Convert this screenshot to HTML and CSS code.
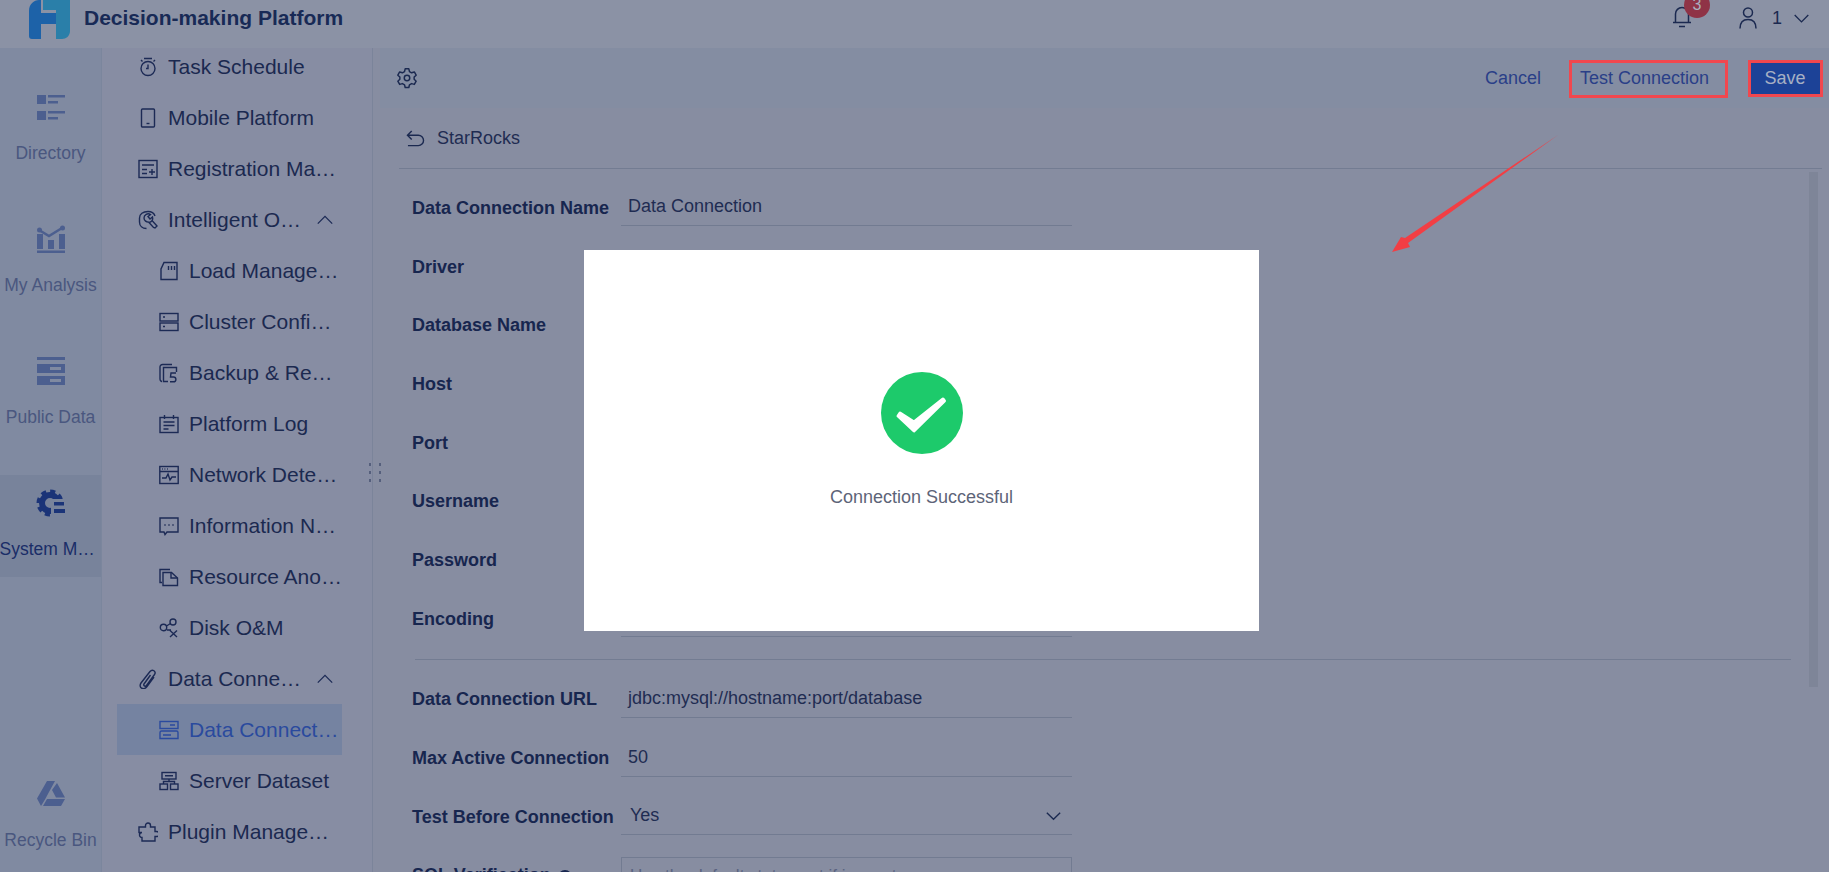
FILE: index.html
```html
<!DOCTYPE html>
<html lang="en">
<head>
<meta charset="utf-8">
<title>Decision-making Platform</title>
<link rel="stylesheet" href="styles.css">
</head>
<body>
<svg class="defs" width="0" height="0" aria-hidden="true">
  <defs>
    <symbol id="i-clock" viewBox="0 0 20 20"><path d="M6 1.500h8M4.500 4.500 3 3M15.500 4.500 17 3"/><circle cx="10" cy="11.500" r="7"/><path d="M10 7.500v4h-2"/></symbol>
    <symbol id="i-mobile" viewBox="0 0 20 20"><rect x="3.500" y="1" width="13" height="18" rx="1"/><path d="M8.500 15.500h3"/></symbol>
    <symbol id="i-reg" viewBox="0 0 20 20"><rect x="1" y="1.500" width="18" height="17"/><path d="M4 6h12M4 10.500h5M4 14.500h5M11 13h6M14 10v6"/></symbol>
    <symbol id="i-ops" viewBox="0 0 20 20"><path d="M17 6C16 3 13 1.500 10 1.500 5 1.500 1.500 4 1.500 8v4c0 4 3 6.500 7 6.500"/><path d="M6 8a4.200 4.200 0 0 1 6.500-3.500l-2.500 2 2 2.500 2.500-2a4.200 4.200 0 0 1-3.500 5.500l4.500 5 1.500 .5 2-2-5-5.500M6 8a4.200 4.200 0 0 0 5 4"/></symbol>
    <symbol id="i-card" viewBox="0 0 20 20"><path d="M5 1.500h13v17H2V8z"/><path d="M9.500 5v4M12.500 5v4M15.500 5v4"/></symbol>
    <symbol id="i-cluster" viewBox="0 0 20 20"><rect x="1" y="1.500" width="18" height="7.500"/><rect x="1" y="11" width="18" height="7.500"/><path d="M4 5h2M4 14.500h2"/></symbol>
    <symbol id="i-backup" viewBox="0 0 20 20"><path d="M3 18.500C2 18.500 1 17.500 1 16V4C1 2.500 2 1.500 3.500 1.500H13"/><path d="M9 18.500H4.500V4.500H17.500V9"/><path d="M17 10h-5l-.5 4h3a2.300 2.300 0 0 1 0 4.800H11"/></symbol>
    <symbol id="i-log" viewBox="0 0 20 20"><rect x="1" y="3.500" width="18" height="15"/><path d="M5.500 1v4M14.500 1v4M4.500 8h11M4.500 11.500h11M4.500 15h5"/></symbol>
    <symbol id="i-net" viewBox="0 0 20 20"><rect x=".8" y="1.500" width="18.400" height="17"/><path d="M1 6.500h18M3 4h.8M5.500 4h.8M8 4h.8M3 13h4l2-4 2 6 2-3h4"/></symbol>
    <symbol id="i-info" viewBox="0 0 20 20"><path d="M1 2h18v14H8l-2 2.500L5 16H1z"/><path d="M5.500 9h1M9.500 9h1M13.500 9h1" stroke-width="2"/></symbol>
    <symbol id="i-res" viewBox="0 0 20 20"><path d="M3 15.500H1V2.500h10"/><path d="M4 18.500V5.500h8.500l6 5.500v7.500z"/><path d="M12 5.500V11h6.500"/></symbol>
    <symbol id="i-disk" viewBox="0 0 20 20"><circle cx="4.500" cy="9.500" r="3.200"/><circle cx="14" cy="4" r="3"/><path d="M7.500 8 11.500 5.500M8 12h4M11 12.500l7 6.500M18 12.500l-7 6.500"/></symbol>
    <symbol id="i-clip" viewBox="0 0 20 20"><path d="M12.500 6 6 15c-1 1.500 1 3 2.500 1.500l8-11c2-3-2-6-4.500-3L3 14c-3 4.500 2.500 8 6 3.500l7-9.500"/></symbol>
    <symbol id="i-conn" viewBox="0 0 20 20"><rect x="1" y="1.500" width="18" height="7"/><path d="M1 12.500v6h18v-6a1.500 1.500 0 0 0-1.500-1.500h-15A1.500 1.500 0 0 0 1 12.500zM11 5h5M4 15h8"/></symbol>
    <symbol id="i-server" viewBox="0 0 20 20"><rect x="3" y="1.500" width="14" height="6.500"/><rect x="1" y="13" width="7.500" height="5.500"/><rect x="11.500" y="13" width="7.500" height="5.500"/><path d="M10 8v2.500M4.500 13v-2.500h11V13M6 4.800h8"/></symbol>
    <symbol id="i-plugin" viewBox="0 0 20 20"><path d="M7.500 3.500a2.500 2.500 0 0 1 5 0V5H17v4.500h1.500a2.500 2.500 0 0 1 0 5H17V19H4v-3.500a2.500 2.500 0 0 1 0-5H1V5h6.500z"/></symbol>
    <symbol id="i-chev" viewBox="0 0 20 20"><path d="M2 14 10 6l8 8"/></symbol>
  </defs>
</svg>

<div class="app">
  <header class="topbar">
    <svg class="logo" viewBox="0 0 41 39" aria-hidden="true">
      <path class="logo-l" d="M0 39V11C0 4 5 0 10 0h2v13h15v11H12v15H3a3 3 0 0 1-3-3z"/>
      <path class="logo-r" d="M14 0h27v31c0 5-4 8-8 8h-6V10H14z"/>
    </svg>
    <div class="brand">Decision-making Platform</div>
    <div class="top-right">
      <div class="bell">
        <svg viewBox="0 2 20 24" aria-hidden="true"><path d="M1 18.500h18M3.500 18.500V10a6.500 6.500 0 0 1 13 0v8.500M7 22.500h6"/></svg>
        <span class="badge">3</span>
      </div>
      <svg class="user" viewBox="0 0 18 22" aria-hidden="true"><circle cx="9" cy="5.500" r="4.500"/><path d="M1 21.500c0-6 3-9 8-9s8 3 8 9"/></svg>
      <span class="user-name">1</span>
      <svg class="user-chev" viewBox="0 0 20 12" aria-hidden="true"><path d="M2 2l8 8 8-8"/></svg>
    </div>
  </header>

  <div class="body">
    <nav class="rail">
      <div class="rail-top">
        <div class="rail-item">
          <svg viewBox="0 0 28 28" aria-hidden="true"><path class="fill" d="M0 2h9v9H0zM0 18h9v9H0zM11 2h17v2.500H11zM11 8h10v2.500H11zM11 18h17v2.500H11zM11 24h10v2.500H11z"/></svg>
          <span>Directory</span>
        </div>
        <div class="rail-item">
          <svg viewBox="0 0 28 28" aria-hidden="true"><path class="fill" d="M0 9h6v15H0zM11 15h6v9h-6zM22 9h6v15h-6zM0 25.500h28V28H0z"/><path class="line" d="M2 5l10 6 13-8"/><circle class="fill" cx="2.500" cy="5" r="2.500"/><circle class="fill" cx="25.500" cy="3" r="2.500"/></svg>
          <span>My Analysis</span>
        </div>
        <div class="rail-item">
          <svg viewBox="0 0 28 28" aria-hidden="true"><path class="fill" d="M0 0h28v3H0zM0 7h28v9H0zM0 19h28v9H0z"/><path class="hole" d="M13 10h11v3H13zM13 22h11v3H13z"/></svg>
          <span>Public Data</span>
        </div>
        <div class="rail-item active">
          <svg viewBox="0 0 28 28" aria-hidden="true"><circle class="gear-ring" cx="13" cy="14" r="8"/><circle class="gear-teeth" cx="13" cy="14" r="11.500"/><path class="gear-cut" d="M14 10h14v18H14z"/><path class="fill" d="M17 13h10v3.500H17zM17 20h11v4H17z"/></svg>
          <span class="clip">System Management</span>
        </div>
      </div>
      <div class="rail-item rail-bin">
        <svg viewBox="0 0 28 28" aria-hidden="true"><path class="fill" d="M10 1h8l-6 11-4 7.500L4 26 0 18.500zM20 3l8 14.500h-9L15 10zM10 19h18l-4 7H6z"/></svg>
        <span>Recycle Bin</span>
      </div>
    </nav>

    <aside class="nav">
      <div class="nav-list">
        <div class="row"><svg class="ico"><use href="#i-clock"/></svg><span class="lbl">Task Schedule</span></div>
        <div class="row"><svg class="ico"><use href="#i-mobile"/></svg><span class="lbl">Mobile Platform</span></div>
        <div class="row"><svg class="ico"><use href="#i-reg"/></svg><span class="lbl">Registration Management</span></div>
        <div class="row"><svg class="ico"><use href="#i-ops"/></svg><span class="lbl short">Intelligent O&amp;M</span><svg class="chev"><use href="#i-chev"/></svg></div>
        <div class="row sub"><svg class="ico"><use href="#i-card"/></svg><span class="lbl">Load Management</span></div>
        <div class="row sub"><svg class="ico"><use href="#i-cluster"/></svg><span class="lbl">Cluster Configuration</span></div>
        <div class="row sub"><svg class="ico"><use href="#i-backup"/></svg><span class="lbl">Backup &amp; Restore</span></div>
        <div class="row sub"><svg class="ico"><use href="#i-log"/></svg><span class="lbl">Platform Log</span></div>
        <div class="row sub"><svg class="ico"><use href="#i-net"/></svg><span class="lbl">Network Detection</span></div>
        <div class="row sub"><svg class="ico"><use href="#i-info"/></svg><span class="lbl">Information Notice</span></div>
        <div class="row sub"><svg class="ico"><use href="#i-res"/></svg><span class="lbl">Resource Anomaly</span></div>
        <div class="row sub"><svg class="ico"><use href="#i-disk"/></svg><span class="lbl">Disk O&amp;M</span></div>
        <div class="row"><svg class="ico"><use href="#i-clip"/></svg><span class="lbl short">Data Connection</span><svg class="chev"><use href="#i-chev"/></svg></div>
        <div class="row sub selected"><svg class="ico"><use href="#i-conn"/></svg><span class="lbl">Data Connection</span></div>
        <div class="row sub"><svg class="ico"><use href="#i-server"/></svg><span class="lbl">Server Dataset</span></div>
        <div class="row"><svg class="ico"><use href="#i-plugin"/></svg><span class="lbl">Plugin Management</span></div>
      </div>
      <div class="grip" aria-hidden="true"><i></i><i></i><i></i><i></i><i></i><i></i></div>
    </aside>

    <main class="main">
      <div class="toolbar">
        <svg class="gear" viewBox="0 0 24 24" aria-hidden="true"><path d="M10 2h4l.7 3 2.300 1.300 3-.9 2 3.500-2.200 2.100v2.400l2.200 2.100-2 3.500-3-.9-2.300 1.300-.7 3h-4l-.7-3L7 18.100l-3 .9-2-3.500L4.200 13.400v-2.400L2 8.900l2-3.500 3 .9L9.300 5z"/><circle cx="12" cy="12" r="3"/></svg>
        <div class="actions">
          <span class="act">Cancel</span>
          <span class="act act-test">Test Connection</span>
          <span class="btn-save">Save</span>
        </div>
      </div>
      <div class="title-row">
        <svg class="back" viewBox="0 0 20 18" aria-hidden="true"><path d="M6 1 1.500 5.500 6 10M2 5.500h11a5.500 5.500 0 0 1 0 11H2"/></svg>
        <span>StarRocks</span>
      </div>
      <div class="form-wrap">
        <form class="form">
          <div class="field"><label>Data Connection Name</label><div class="val">Data Connection</div></div>
          <div class="field"><label>Driver</label><div class="val"></div></div>
          <div class="field"><label>Database Name</label><div class="val"></div></div>
          <div class="field"><label>Host</label><div class="val"></div></div>
          <div class="field"><label>Port</label><div class="val"></div></div>
          <div class="field"><label>Username</label><div class="val"></div></div>
          <div class="field"><label>Password</label><div class="val"></div></div>
          <div class="field"><label>Encoding</label><div class="val"></div></div>
          <hr class="sep">
          <div class="field"><label>Data Connection URL</label><div class="val">jdbc:mysql://hostname:port/database</div></div>
          <div class="field"><label>Max Active Connection</label><div class="val">50</div></div>
          <div class="field"><label>Test Before Connection</label><div class="val val-sel">Yes<svg viewBox="0 0 20 12" aria-hidden="true"><path d="M2 2l8 8 8-8"/></svg></div></div>
          <div class="field"><label>SQL Verification <span class="help">?</span></label><div class="val val-box">Use the default statement if is empty</div></div>
        </form>
        <div class="scrollbar"></div>
      </div>
    </main>
  </div>

  <div class="dialog" role="dialog">
    <svg class="ok" viewBox="0 0 82 82" aria-hidden="true"><circle cx="41" cy="41" r="41"/><path d="M19 41l14 9 29-23 1.500 2L33 59 17 44z"/></svg>
    <p>Connection Successful</p>
  </div>

  <div class="mark mark-test"></div>
  <div class="mark mark-save"></div>
  <svg class="arrow" viewBox="0 0 170 120" aria-hidden="true"><path d="M168 1 15 104l-4-1-9 15 18-5-2-4z"/></svg>
</div>
</body>
</html>
```
FILE: styles.css
```css
* { box-sizing: border-box; }
html, body { margin: 0; height: 100%; }
body {
  font-family: "Liberation Sans", Arial, sans-serif;
  color: #1b2950;
  background: #878da1;
  overflow: hidden;
}
.defs { position: absolute; }
symbol { fill: none; stroke: currentColor; stroke-width: 1.4; }
.app { position: relative; width: 1829px; height: 872px; overflow: hidden; display: flex; flex-direction: column; }

.topbar { height: 48px; flex: none; display: flex; align-items: center; background: #8b92a5; padding: 0 0 12px 29px; }
.logo { width: 41px; height: 39px; align-self: flex-start; margin-right: 14px; flex: none; }
.logo-l { fill: #1d62a8; }
.logo-r { fill: #2a7fa9; }
.brand { font-size: 21px; font-weight: 700; color: #182a56; }
.top-right { margin-left: auto; display: flex; align-items: center; padding-right: 19px; color: #1b2950; }
.bell { position: relative; width: 20px; height: 24px; margin-right: 47px; }
.bell svg { width: 20px; height: 24px; display: block; fill: none; stroke: #1b2950; stroke-width: 1.5; }
.badge { position: absolute; left: 12px; top: -14px; width: 26px; height: 26px; border-radius: 50%; background: #8f3346; color: #aab0bf; font-size: 16px; line-height: 26px; text-align: center; }
.user { width: 18px; height: 22px; fill: none; stroke: #1b2950; stroke-width: 1.5; margin-right: 15px; }
.user-name { font-size: 18px; margin-right: 11px; }
.user-chev { width: 17px; height: 11px; fill: none; stroke: #1b2950; stroke-width: 1.6; }

.body { flex: 1; min-height: 0; display: flex; }

.rail { width: 102px; flex: none; background: #808aa1; display: flex; flex-direction: column; justify-content: space-between; border-right: 1px solid #7b869d; }
.rail-top { display: flex; flex-direction: column; gap: 30px; padding-top: 28px; }
.rail-item { height: 102px; padding-top: 17px; display: flex; flex-direction: column; align-items: center; color: #4a577f; font-size: 17.5px; line-height: 20px; gap: 22px; }
.rail-item svg { width: 28px; height: 28px; flex: none; overflow: visible; }
.rail-item .fill { fill: #4c5f8f; }
.rail-item .line { fill: none; stroke: #4c5f8f; stroke-width: 2.5; }
.rail-item .hole { fill: #808aa1; }
.rail-item.active { background: #78839b; color: #1a2d68; margin-top: 3px; padding-top: 14px; }
.rail-item.active .fill { fill: #1b3478; }
.gear-ring { fill: none; stroke: #1b3478; stroke-width: 6; }
.gear-teeth { fill: none; stroke: #1b3478; stroke-width: 4; stroke-dasharray: 5 4; }
.gear-cut { fill: #78839b; }
.clip { display: block; width: 97px; margin-right: 5px; overflow: hidden; white-space: nowrap; text-overflow: ellipsis; }
.rail-bin { height: auto; padding-top: 0; padding-bottom: 22px; }

.nav { width: 271px; flex: none; position: relative; background: #878da3; border-right: 1px solid #7b849a; }
.nav-list { margin: -7px 0 0 15px; width: 225px; }
.row { height: 51px; display: flex; align-items: center; padding: 0 0 0 21px; font-size: 21px; color: #1b2950; }
.row.sub { padding-left: 42px; }
.ico { width: 20px; height: 20px; flex: none; color: #1c2a55; margin-right: 10px; }
.lbl { overflow: hidden; white-space: nowrap; text-overflow: ellipsis; min-width: 0; flex: 1; }
.lbl.short { flex: none; width: 137px; }
.chev { width: 18px; height: 18px; margin-left: 11px; color: #1c2a55; flex: none; }
.selected { background: #7583a1; color: #2a4a9e; }
.selected .ico { color: #2a4a9e; }
.grip { position: absolute; right: -10px; top: 415px; display: grid; grid-template-columns: 3px 3px; gap: 5px 7px; }
.grip i { width: 2px; height: 3px; background: #555f7c; }

.main { flex: 1; min-width: 0; display: flex; flex-direction: column; padding-left: 7px; }
.toolbar { height: 60px; flex: none; background: #848da2; display: flex; align-items: center; padding: 0 9px 0 16px; }
.gear { width: 22px; height: 22px; fill: none; stroke: #1b2950; stroke-width: 1.6; stroke-linejoin: round; }
.actions { margin-left: auto; display: flex; align-items: center; font-size: 18px; color: #2a3f88; }
.act { margin-right: 39px; }
.act-test { margin-right: 41px; }
.btn-save { width: 70px; height: 33px; background: #1c4297; color: #a6b0c4; display: flex; align-items: center; justify-content: center; }

.title-row { height: 61px; flex: none; display: flex; align-items: center; padding-left: 7px; margin: 0 7px 0 19px; border-bottom: 1px solid #737c92; font-size: 18px; color: #1f2c52; }
.back { width: 19px; height: 17px; fill: none; stroke: #1b2950; stroke-width: 1.5; margin-right: 12px; }

.form-wrap { flex: 1; min-height: 0; position: relative; overflow: hidden; padding-top: 10px; }
.form { width: 1400px; margin-left: 32px; }
.field { height: 58.7px; display: flex; align-items: center; }
.field label { width: 209px; flex: none; font-size: 18px; font-weight: 700; color: #17264f; white-space: nowrap; }
.help { display: inline-block; width: 14px; height: 14px; margin-left: 2px; border-radius: 50%; background: #17264f; color: #878da1; font-size: 11px; line-height: 14px; text-align: center; }
.val { width: 451px; height: 36px; border-bottom: 1px solid #727b91; display: flex; align-items: center; padding: 0 0 2px 7px; font-size: 18px; color: #1f2c52; }
.val-sel { justify-content: space-between; padding: 0 10px 2px 9px; }
.val-sel svg { width: 17px; height: 10px; fill: none; stroke: #1b2950; stroke-width: 1.6; }
.val-box { border: 1px solid #727b91; color: #596380; padding: 0 0 0 8px; height: 38px; font-size: 17px; }
.sep { border: 0; border-top: 1px solid #737c92; margin: 10px 0 11px 3px; width: 1376px; }
.scrollbar { position: absolute; right: 11px; top: 3px; height: 515px; width: 9px; background: #7e8598; }

.dialog { position: absolute; left: 584px; top: 250px; width: 675px; height: 381px; background: #fff; display: flex; flex-direction: column; align-items: center; }
.ok { width: 82px; height: 82px; margin-top: 122px; flex: none; }
.ok circle { fill: #1dca6b; }
.ok path { fill: #fff; stroke: #fff; stroke-width: 3; stroke-linejoin: round; }
.dialog p { margin: 33px 0 0; font-size: 18px; color: #5d6478; }

.mark { position: absolute; border: 3px solid #f1474e; }
.mark-test { left: 1569px; top: 60px; width: 159px; height: 38px; }
.mark-save { left: 1748px; top: 60px; width: 75px; height: 37px; }
.arrow { position: absolute; left: 1390px; top: 134px; width: 170px; height: 120px; fill: #f23e44; }
```
